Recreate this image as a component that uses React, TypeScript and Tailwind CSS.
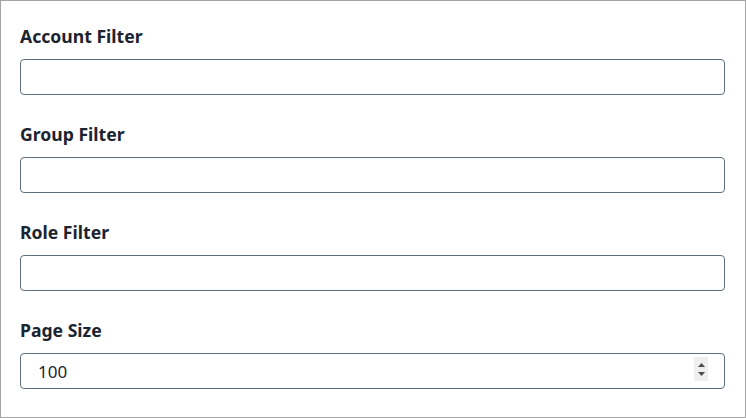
const FIELDS = [
  { id: 'account', label: 'Account Filter', type: 'text', value: '' },
  { id: 'group', label: 'Group Filter', type: 'text', value: '' },
  { id: 'role', label: 'Role Filter', type: 'text', value: '' },
  { id: 'pageSize', label: 'Page Size', type: 'number', value: '100' },
];

function Spinner() {
  // always-visible stepper, like the reference shows it
  return (
    <div className="pointer-events-none absolute top-[4px] right-[17px] flex h-6 w-[14px] flex-col items-center justify-center gap-[5px] bg-[#efefef]">
      <svg width="7" height="4" viewBox="0 0 7 4">
        <path d="M3.5 0L7 4H0z" fill="#4d4d4d" />
      </svg>
      <svg width="7" height="4" viewBox="0 0 7 4">
        <path d="M0 0h7L3.5 4z" fill="#4d4d4d" />
      </svg>
    </div>
  );
}

export default function App() {
  return (
    <div
      className="h-[418px] w-[746px] border border-[#a3a3a3] bg-white pt-[23px] pr-[20px] pl-[19px]"
      style={{ fontFamily: '"Source Sans Pro", "Noto Sans", Arial, sans-serif' }}
    >
      <div className="flex flex-col gap-[27px]">
        {FIELDS.map((f) => (
          <div key={f.id} className="flex flex-col">
            <label htmlFor={f.id} className="mb-[11px] h-6 text-[17.6px] leading-6 font-bold text-[#1b2430]">
              {f.label}
            </label>
            <div className="relative">
              <input
                id={f.id}
                type={f.type}
                defaultValue={f.value}
                className="h-9 w-full [appearance:textfield] rounded-[4px] border border-[#5f6f7e] bg-white px-[17px] text-[17px] text-[#1b2430] outline-none [&::-webkit-inner-spin-button]:appearance-none [&::-webkit-outer-spin-button]:appearance-none"
              />
              {f.type === 'number' && <Spinner />}
            </div>
          </div>
        ))}
      </div>
    </div>
  );
}
